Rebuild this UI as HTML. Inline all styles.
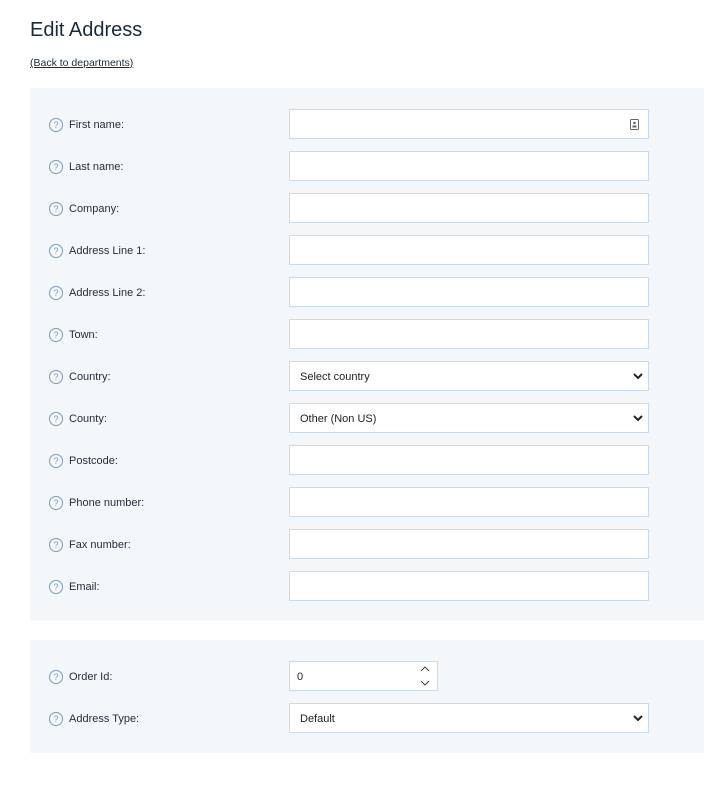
<!DOCTYPE html><html><head><style>
body{margin:0;width:704px;height:788px;background:#fff;font-family:"Liberation Sans",sans-serif;position:relative;overflow:hidden}
h1{position:absolute;left:30px;top:19px;margin:0;font-size:20px;font-weight:normal;color:#1a2a3a}
a{position:absolute;left:30px;top:57px;font-size:10.5px;color:#1a2a3a;text-decoration:underline}
.p{position:absolute;left:30px;width:674px;background:#f3f7fa}
.l{position:absolute;left:69px;font-size:11px;color:#2a2a3a;margin-top:1px}
.q{position:absolute;left:49px;width:12px;height:12px;border:1.2px solid #7a9ab8;border-radius:50%;font-size:9px;line-height:12px;text-align:center;color:#7a9ab8}
.i{position:absolute;left:289px;width:358px;height:28px;border:1px solid #c9dbe9;background:#fff;font-size:11px;color:#222;line-height:30px;box-sizing:content-box}
.i span{padding-left:10px}
.c{position:absolute;right:5px;top:10px}
</style></head><body>
<h1>Edit Address</h1>
<a>(Back to departments)</a>
<div class="p" style="top:88px;height:533px"></div>
<div class="p" style="top:640px;height:113px"></div>
<div class="q" style="top:118px">?</div><div class="l" style="top:118px">First name:</div><div class="i" style="top:109px"><svg style="position:absolute;right:9px;top:9px" width="9" height="11"><rect x="0.5" y="0.5" width="8" height="10" rx="1" fill="none" stroke="#666"/><circle cx="4.5" cy="4" r="1.3" fill="#666"/><rect x="2.5" y="6.5" width="4" height="2" fill="#666"/></svg></div>
<div class="q" style="top:160px">?</div><div class="l" style="top:160px">Last name:</div><div class="i" style="top:151px"></div>
<div class="q" style="top:202px">?</div><div class="l" style="top:202px">Company:</div><div class="i" style="top:193px"></div>
<div class="q" style="top:244px">?</div><div class="l" style="top:244px">Address Line 1:</div><div class="i" style="top:235px"></div>
<div class="q" style="top:286px">?</div><div class="l" style="top:286px">Address Line 2:</div><div class="i" style="top:277px"></div>
<div class="q" style="top:328px">?</div><div class="l" style="top:328px">Town:</div><div class="i" style="top:319px"></div>
<div class="q" style="top:370px">?</div><div class="l" style="top:370px">Country:</div><div class="i" style="top:361px"><span>Select country</span><svg class="c" width="10" height="8"><path d="M1 2l4 4 4-4" fill="none" stroke="#222" stroke-width="2"/></svg></div>
<div class="q" style="top:412px">?</div><div class="l" style="top:412px">County:</div><div class="i" style="top:403px"><span>Other (Non US)</span><svg class="c" width="10" height="8"><path d="M1 2l4 4 4-4" fill="none" stroke="#222" stroke-width="2"/></svg></div>
<div class="q" style="top:454px">?</div><div class="l" style="top:454px">Postcode:</div><div class="i" style="top:445px"></div>
<div class="q" style="top:496px">?</div><div class="l" style="top:496px">Phone number:</div><div class="i" style="top:487px"></div>
<div class="q" style="top:538px">?</div><div class="l" style="top:538px">Fax number:</div><div class="i" style="top:529px"></div>
<div class="q" style="top:580px">?</div><div class="l" style="top:580px">Email:</div><div class="i" style="top:571px"></div>
<div class="q" style="top:670px">?</div><div class="l" style="top:670px">Order Id:</div><div class="i" style="top:661px;width:147px"><span style="padding-left:7px">0</span><svg style="position:absolute;right:7px;top:3px" width="10" height="22"><path d="M1 6l4-4 4 4M1 16l4 4 4-4" fill="none" stroke="#444" stroke-width="1"/></svg></div>
<div class="q" style="top:712px">?</div><div class="l" style="top:712px">Address Type:</div><div class="i" style="top:703px"><span>Default</span><svg class="c" width="10" height="8"><path d="M1 2l4 4 4-4" fill="none" stroke="#222" stroke-width="2"/></svg></div>
</body></html>
